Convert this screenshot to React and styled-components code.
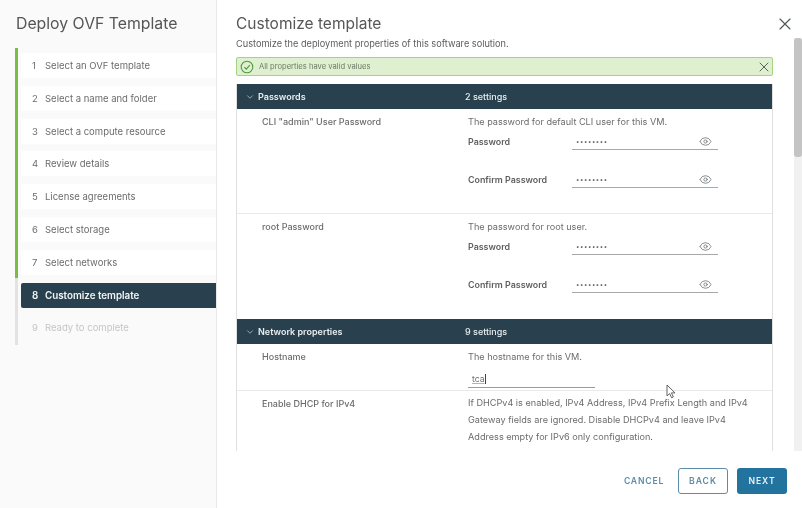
import React from 'react';
import styled, { createGlobalStyle } from 'styled-components';
import { ChevronDown, X, Eye } from 'lucide-react';

const steps = [
    'Select an OVF template',
    'Select a name and folder',
    'Select a compute resource',
    'Review details',
    'License agreements',
    'Select storage',
    'Select networks',
    'Customize template',
    'Ready to complete',
];

const PasswordField = ({ label }) => (
    <FieldRow>
        <FieldLabel>{label}</FieldLabel>
        <FieldInput>
            <Dots>••••••••</Dots>
            <Eye size={13} strokeWidth={1.4} color="#666c70" />
        </FieldInput>
    </FieldRow>
);

const App = () => {
    return (
        <Page>
            <GlobalStyle />
            <Sidebar>
                <WizardTitle>Deploy OVF Template</WizardTitle>
                <StepList>
                    {steps.map((step, i) => (
                        <Step key={step} $active={i === 7} $disabled={i === 8}>
                            <StepNumber>{i + 1}</StepNumber>
                            {step}
                        </Step>
                    ))}
                </StepList>
            </Sidebar>
            <Main>
                <Header>
                    <PageTitle>Customize template</PageTitle>
                    <CloseButton>
                        <X size={20} strokeWidth={1.4} color="#565c60" />
                    </CloseButton>
                </Header>
                <Body>
                    <Content>
                        <Subtitle>Customize the deployment properties of this software solution.</Subtitle>
                        <Alert>
                            <AlertIcon viewBox="0 0 14 14">
                                <circle cx="7" cy="7" r="5.8" fill="none" stroke="#4f9a3a" strokeWidth="1.1" />
                                <path d="M4.3 7.2l2 2 3.5-4" fill="none" stroke="#4f9a3a" strokeWidth="1.1" />
                            </AlertIcon>
                            <AlertText>All properties have valid values</AlertText>
                            <AlertClose>
                                <X size={16} strokeWidth={1.4} color="#4c5a50" />
                            </AlertClose>
                        </Alert>
                        <Panel>
                            <SectionHeader>
                                <SectionName>
                                    <ChevronDown size={10} strokeWidth={1.6} color="#d5dde0" />
                                    Passwords
                                </SectionName>
                                <SectionCount>2 settings</SectionCount>
                            </SectionHeader>
                            <PropertyRow $height={105}>
                                <PropertyName>CLI "admin" User Password</PropertyName>
                                <PropertyDetail>
                                    <Description>The password for default CLI user for this VM.</Description>
                                    <PasswordField label="Password" />
                                    <PasswordField label="Confirm Password" />
                                </PropertyDetail>
                            </PropertyRow>
                            <PropertyRow $height={105} $plain>
                                <PropertyName>root Password</PropertyName>
                                <PropertyDetail>
                                    <Description>The password for root user.</Description>
                                    <PasswordField label="Password" />
                                    <PasswordField label="Confirm Password" />
                                </PropertyDetail>
                            </PropertyRow>
                            <SectionHeader>
                                <SectionName>
                                    <ChevronDown size={10} strokeWidth={1.6} color="#d5dde0" />
                                    Network properties
                                </SectionName>
                                <SectionCount>9 settings</SectionCount>
                            </SectionHeader>
                            <PropertyRow $height={47}>
                                <PropertyName>Hostname</PropertyName>
                                <PropertyDetail>
                                    <Description>The hostname for this VM.</Description>
                                    <HostInput>
                                        <HostText>tca</HostText>
                                        <Caret />
                                    </HostInput>
                                </PropertyDetail>
                            </PropertyRow>
                            <PropertyRow $height={62} $plain>
                                <PropertyName>Enable DHCP for IPv4</PropertyName>
                                <PropertyDetail>
                                    <LongDescription>
                                        If DHCPv4 is enabled, IPv4 Address, IPv4 Prefix Length and IPv4 Gateway fields are ignored. Disable DHCPv4 and leave IPv4 Address empty for IPv6 only configuration.
                                    </LongDescription>
                                </PropertyDetail>
                            </PropertyRow>
                        </Panel>
                    </Content>
                    <Scrollbar>
                        <ScrollThumb />
                    </Scrollbar>
                    <Cursor viewBox="0 0 10 15">
                        <path d="M1 1v11l2.6-2.4 2 4.2 1.8-.8-2-4.1H9z" fill="#fff" stroke="#555" strokeWidth="0.9" />
                    </Cursor>
                </Body>
                <Footer>
                    <CancelButton>CANCEL</CancelButton>
                    <BackButton>BACK</BackButton>
                    <NextButton>NEXT</NextButton>
                </Footer>
            </Main>
        </Page>
    );
};

export default App;

const GlobalStyle = createGlobalStyle`
    html, body {
        margin: 0;
        padding: 0;
        background: #fff;
    }
    body {
        font-family: 'Inter', 'Liberation Sans', sans-serif;
    }
`;

const Page = styled.div`
    display: flex;
    width: 802px;
    height: 508px;
    overflow: hidden;
    background: #fff;
    color: #666;
    filter: blur(0.35px);
`;

const Sidebar = styled.aside`
    flex: none;
    width: 201px;
    padding: 14px 0 0 15px;
    background: #fafafa;
    border-right: 1px solid #e8e8e8;
`;

const WizardTitle = styled.h1`
    margin: 0 0 15px 1px;
    height: 19px;
    font-size: 15.8px;
    line-height: 19px;
    font-weight: 400;
    color: #565656;
    white-space: nowrap;
`;

const StepList = styled.div`
    position: relative;
    display: flex;
    flex-direction: column;
    gap: 7.8px;
    padding: 5px 0 5px 3px;
    border-left: 3px solid #e2e2e2;

    &::before {
        content: '';
        position: absolute;
        left: -3px;
        top: 0;
        width: 3px;
        height: 230px;
        background: #79bd43;
    }
`;

const Step = styled.div`
    display: flex;
    align-items: center;
    height: 25px;
    padding-left: 11px;
    font-size: ${(p) => (p.$active ? 9.8 : 9.5)}px;
    font-weight: ${(p) => (p.$active ? 600 : 400)};
    white-space: nowrap;
    border-radius: 2px 0 0 2px;
    background: ${(p) => (p.$active ? '#29414e' : p.$disabled ? 'transparent' : '#fff')};
    color: ${(p) => (p.$active ? '#f0f4f5' : p.$disabled ? '#c6c6c6' : '#6c6c6c')};
`;

const StepNumber = styled.span`
    width: 13px;
    flex: none;
`;

const Main = styled.main`
    flex: 1;
    min-width: 0;
    display: flex;
    flex-direction: column;
`;

const Header = styled.header`
    display: flex;
    align-items: center;
    justify-content: space-between;
    height: 19px;
    padding: 14px 7px 0 19px;
`;

const PageTitle = styled.h2`
    margin: 0;
    font-size: 15.5px;
    line-height: 19px;
    font-weight: 400;
    color: #575757;
`;

const CloseButton = styled.div`
    display: flex;
`;

const Body = styled.div`
    position: relative;
    display: flex;
    height: 413px;
    margin-top: 5px;
    overflow: hidden;
`;

const Content = styled.div`
    flex: none;
    width: 537px;
    margin-left: 19px;
`;

const Subtitle = styled.p`
    margin: 0 0 7px;
    height: 12px;
    font-size: 9.2px;
    line-height: 12px;
    color: #5c5c5c;
`;

const Alert = styled.div`
    display: flex;
    align-items: center;
    height: 17px;
    padding: 0 2px;
    border: 1px solid #a6d381;
    border-radius: 2px;
    background: #def0d0;
`;

const AlertIcon = styled.svg`
    width: 14px;
    height: 14px;
    margin-left: 1px;
    flex: none;
`;

const AlertText = styled.span`
    flex: 1;
    margin-left: 5px;
    font-size: 7.6px;
    color: #6d7a66;
`;

const AlertClose = styled.div`
    display: flex;
    margin-right: -2px;
`;

const Panel = styled.div`
    margin-top: 8px;
    border-left: 1px solid #e0e0e0;
    border-right: 1px solid #e0e0e0;
`;

const SectionHeader = styled.div`
    display: flex;
    align-items: center;
    height: 25px;
    background: #29414e;
    color: #e9eef0;
    font-size: 9px;
    font-weight: 600;
`;

const SectionName = styled.div`
    display: flex;
    align-items: center;
    gap: 3px;
    flex: none;
    width: 220px;
    padding-left: 8px;
`;

const SectionCount = styled.div`
    font-weight: 500;
`;

const PropertyRow = styled.div`
    display: flex;
    height: ${(p) => p.$height}px;
    box-sizing: border-box;
    border-bottom: ${(p) => (p.$plain ? 'none' : '1px solid #e6eaeb')};
`;

const PropertyName = styled.div`
    flex: none;
    width: 206px;
    padding: 7px 0 0 25px;
    font-size: 9px;
    line-height: 11px;
    font-weight: 500;
    color: #6c6c6c;
`;

const PropertyDetail = styled.div`
    flex: 1;
    padding-top: 7px;
`;

const Description = styled.div`
    font-size: 9.15px;
    line-height: 11px;
    white-space: nowrap;
    color: #6c6c6c;
`;

const LongDescription = styled.div`
    width: 288px;
    margin-top: -3px;
    font-size: 9.15px;
    line-height: 16.8px;
    color: #6c6c6c;
`;

const FieldRow = styled.div`
    display: flex;
    align-items: center;
    height: 17px;
    margin-top: 6px;

    & + & {
        margin-top: 21px;
    }
`;

const FieldLabel = styled.label`
    flex: none;
    width: 104px;
    font-size: 8.9px;
    font-weight: 600;
    color: #5f5f5f;
`;

const FieldInput = styled.div`
    display: flex;
    align-items: center;
    justify-content: space-between;
    box-sizing: border-box;
    width: 146px;
    height: 17px;
    padding: 0 6px 0 4px;
    border-bottom: 1px solid #a8a8a8;
`;

const Dots = styled.span`
    font-size: 6px;
    letter-spacing: 0.6px;
    color: #555;
`;

const HostInput = styled.div`
    display: flex;
    align-items: center;
    box-sizing: border-box;
    width: 127px;
    height: 17px;
    margin-top: 9px;
    padding-left: 4px;
    border-bottom: 1px solid #58b4c4;
`;

const HostText = styled.span`
    font-size: 8.6px;
    color: #707070;
    text-decoration: underline #e2a0a0 0.5px;
    text-underline-offset: 1px;
`;

const Caret = styled.span`
    width: 1px;
    height: 10px;
    background: #444;
`;

const Scrollbar = styled.div`
    flex: none;
    width: 8px;
    margin-left: auto;
    background: #f1f1f1;
`;

const ScrollThumb = styled.div`
    height: 119px;
    border-radius: 3px;
    background: #c4c4c4;
`;

const Cursor = styled.svg`
    position: absolute;
    left: 449px;
    top: 346px;
    width: 10px;
    height: 15px;
`;

const Footer = styled.footer`
    display: flex;
    align-items: center;
    justify-content: flex-end;
    gap: 9px;
    height: 26px;
    margin-top: 17px;
    padding-right: 15px;
`;

const FooterButton = styled.button`
    box-sizing: border-box;
    width: 50px;
    height: 26px;
    padding: 0;
    border-radius: 3px;
    font-family: inherit;
    font-size: 8.6px;
    font-weight: 600;
    letter-spacing: 1px;
`;

const CancelButton = styled(FooterButton)`
    border: none;
    background: transparent;
    letter-spacing: 0.8px;
    color: #5d8ca8;
`;

const BackButton = styled(FooterButton)`
    border: 1px solid #5d8ca8;
    background: #fff;
    color: #5d8ca8;
`;

const NextButton = styled(FooterButton)`
    border: none;
    background: #23739f;
    color: #e8f2f7;
`;
